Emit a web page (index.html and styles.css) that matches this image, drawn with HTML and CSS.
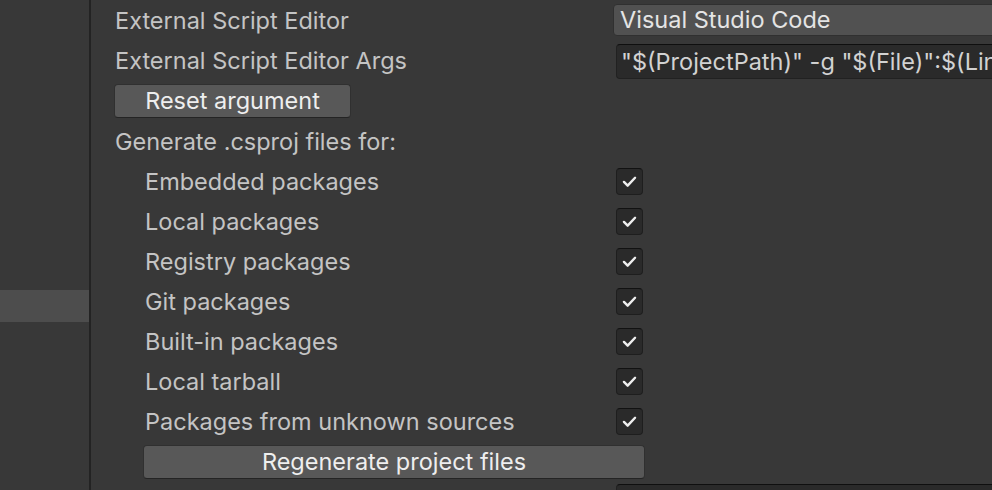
FILE: index.html
```html
<!DOCTYPE html>
<html lang="en">
<head>
    <meta charset="UTF-8">
    <title>Preferences - External Tools</title>
    <link rel="stylesheet" href="styles.css">
</head>
<body>
    <div id="wrap">
        <div class="side">
            <div class="side-item active"></div>
        </div>
        <div class="sep"></div>
        <div class="main">
            <div class="row">
                <div class="label">External Script Editor</div>
                <div class="popup">Visual Studio Code</div>
            </div>
            <div class="row">
                <div class="label">External Script Editor Args</div>
                <div class="field">"$(ProjectPath)" -g "$(File)":$(Line):$(Column)</div>
            </div>
            <div class="row">
                <div class="btn reset">Reset argument</div>
            </div>
            <div class="row head">
                <div class="label">Generate .csproj files for:</div>
            </div>
            <div class="row sub">
                <div class="label">Embedded packages</div>
                <div class="check"><svg viewBox="0 0 27 27"><polyline points="7.5,14 11.5,18 19.5,9.5"/></svg></div>
            </div>
            <div class="row sub">
                <div class="label">Local packages</div>
                <div class="check"><svg viewBox="0 0 27 27"><polyline points="7.5,14 11.5,18 19.5,9.5"/></svg></div>
            </div>
            <div class="row sub">
                <div class="label">Registry packages</div>
                <div class="check"><svg viewBox="0 0 27 27"><polyline points="7.5,14 11.5,18 19.5,9.5"/></svg></div>
            </div>
            <div class="row sub">
                <div class="label">Git packages</div>
                <div class="check"><svg viewBox="0 0 27 27"><polyline points="7.5,14 11.5,18 19.5,9.5"/></svg></div>
            </div>
            <div class="row sub">
                <div class="label">Built-in packages</div>
                <div class="check"><svg viewBox="0 0 27 27"><polyline points="7.5,14 11.5,18 19.5,9.5"/></svg></div>
            </div>
            <div class="row sub">
                <div class="label">Local tarball</div>
                <div class="check"><svg viewBox="0 0 27 27"><polyline points="7.5,14 11.5,18 19.5,9.5"/></svg></div>
            </div>
            <div class="row sub">
                <div class="label">Packages from unknown sources</div>
                <div class="check"><svg viewBox="0 0 27 27"><polyline points="7.5,14 11.5,18 19.5,9.5"/></svg></div>
            </div>
            <div class="row sub">
                <div class="btn regen">Regenerate project files</div>
            </div>
            <div class="row last">
                <div class="label"></div>
                <div class="field dark"></div>
            </div>
        </div>
    </div>
</body>
</html>
```
FILE: styles.css
```css
*{margin:0;padding:0;box-sizing:border-box;}
html,body{
    width: 992px;
    height: 490px;
    overflow: hidden;
    background-color: #383838;
    font-family: Inter, "Noto Sans", sans-serif;
    font-size: 23.5px;
    color: #c4c4c4;
}
#wrap{
    display: flex;
    height: 490px;
    overflow: hidden;
}
.side{
    width: 89px;
    flex-shrink: 0;
    padding-top: 290px;
}
.side-item.active{
    height: 32px;
    background-color: #4d4d4d;
}
.sep{
    width: 2px;
    flex-shrink: 0;
    background-color: #232323;
}
.main{
    flex-shrink: 0;
    width: 1100px;
    padding-left: 23px;
}
.row{
    display: flex;
    align-items: center;
    height: 40px;
}
.label{
    width: 499px;
    flex-shrink: 0;
    padding-left: 1px;
    white-space: nowrap;
}
.head .label,
.sub .label{
    padding-top: 3px;
}
.sub .label{
    padding-left: 31px;
}
.popup{
    width: 500px;
    height: 32px;
    padding-left: 6px;
    line-height: 30px;
    background-color: #515151;
    border: 1px solid #303030;
    border-radius: 4px;
    color: #e4e4e4;
    white-space: nowrap;
}
.field{
    width: 376px;
    height: 35px;
    margin: 3px 0 0 3px;
    padding-left: 4px;
    line-height: 33px;
    background-color: #2a2a2a;
    border: 1px solid #212121;
    border-top-color: #0f0f0f;
    border-radius: 4px 0 0 4px;
    border-right: none;
    color: #d2d2d2;
    white-space: nowrap;
    overflow: hidden;
}
.btn{
    height: 34px;
    line-height: 32px;
    text-align: center;
    background-color: #585858;
    border: 1px solid #303030;
    border-bottom-color: #242424;
    border-radius: 4px;
    color: #eeeeee;
}
.reset{
    width: 237px;
    margin-top: 2px;
}
.regen{
    width: 502px;
    margin: 4px 0 0 29px;
}
.check{
    width: 27px;
    height: 27px;
    margin: 2px 0 0 3px;
    background-color: #2a2a2a;
    border: 1px solid #1e1e1e;
    border-top-color: #121212;
    border-radius: 4px;
}
.check svg{
    display: block;
    width: 25px;
    height: 25px;
}
.check polyline{
    fill: none;
    stroke: #eeeeee;
    stroke-width: 2.6;
    stroke-linecap: round;
    stroke-linejoin: round;
}
.last{
    align-items: flex-start;
}
.field.dark{
    margin-top: 4px;
}
```
